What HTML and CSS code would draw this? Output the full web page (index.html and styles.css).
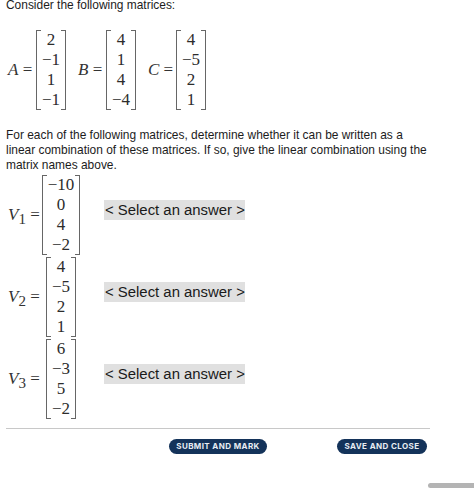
FILE: index.html
```html
<!DOCTYPE html>
<html lang="en">
<head>
<meta charset="utf-8">
<title>Matrices</title>
<link rel="stylesheet" href="styles.css">
</head>
<body>
<main class="page">
  <p class="text">Consider the following matrices:</p>
  <div class="given">
    <div class="eq"><span class="name"><i>A</i> =</span>
      <div class="matrix"><span>2</span><span>−1</span><span>1</span><span>−1</span></div></div>
    <div class="eq"><span class="name"><i>B</i> =</span>
      <div class="matrix"><span>4</span><span>1</span><span>4</span><span>−4</span></div></div>
    <div class="eq"><span class="name"><i>C</i> =</span>
      <div class="matrix"><span>4</span><span>−5</span><span>2</span><span>1</span></div></div>
  </div>
  <p class="text">For each of the following matrices, determine whether it can be written as a linear combination of these matrices. If so, give the linear combination using the matrix names above.</p>
  <div class="questions">
    <div class="question">
      <span class="vname"><i>V</i><sub>1</sub> =</span>
      <div class="slot"><div class="matrix wide"><span>−10</span><span>0</span><span>4</span><span>−2</span></div></div>
      <span class="select">&lt; Select an answer &gt;</span>
    </div>
    <div class="question">
      <span class="vname"><i>V</i><sub>2</sub> =</span>
      <div class="slot"><div class="matrix"><span>4</span><span>−5</span><span>2</span><span>1</span></div></div>
      <span class="select">&lt; Select an answer &gt;</span>
    </div>
    <div class="question">
      <span class="vname"><i>V</i><sub>3</sub> =</span>
      <div class="slot"><div class="matrix"><span>6</span><span>−3</span><span>5</span><span>−2</span></div></div>
      <span class="select">&lt; Select an answer &gt;</span>
    </div>
  </div>
  <hr class="rule">
  <div class="actions">
    <button class="btn submit" type="button">SUBMIT AND MARK</button>
    <button class="btn save" type="button">SAVE AND CLOSE</button>
  </div>
</main>
<div class="thumb"></div>
</body>
</html>
```
FILE: styles.css
```css
html, body {
  margin: 0;
  padding: 0;
  background: #fff;
  overflow: hidden;
  height: 100%;
}
.page {
  width: 424px;
  margin: -2px 0 0 6px;
  color: #1c1c1c;
  font-family: "Liberation Sans", Arial, sans-serif;
}
.text {
  margin: 0;
  font-size: 11.95px;
  line-height: 15px;
}
.given {
  display: flex;
  gap: 12px;
  margin: 17px 0 18px 2px;
}
.eq {
  display: flex;
  align-items: center;
  gap: 1px;
}
.name {
  font-family: "Liberation Serif", serif;
  font-size: 17px;
  color: #333;
  white-space: nowrap;
}
.eq .name { min-width: 27px; }
.matrix {
  position: relative;
  display: flex;
  flex-direction: column;
  width: 30px;
  height: 80px;
  box-sizing: border-box;
  align-items: center;
  font-family: "Liberation Serif", serif;
  font-size: 17px;
  color: #2c2c2c;
}
.matrix.wide { width: 38px; }
.matrix span {
  height: 20px;
  line-height: 20px;
  white-space: nowrap;
}
.matrix::before,
.matrix::after {
  content: "";
  position: absolute;
  top: 0;
  bottom: 0;
  width: 4px;
  border: 1px solid #666;
}
.matrix::before { left: 0; border-right: 0; }
.matrix::after { right: 0; border-left: 0; }
.questions {
  display: flex;
  flex-direction: column;
  gap: 1px;
  margin: 1px 0 0 2px;
}
.question {
  display: flex;
  align-items: center;
  height: 81px;
}
.vname {
  width: 30px;
  font-family: "Liberation Serif", serif;
  font-size: 17px;
  color: #333;
  white-space: nowrap;
}
.vname sub {
  font-size: 15px;
  line-height: 0;
  vertical-align: -4px;
}
.slot {
  width: 46px;
  display: flex;
  justify-content: center;
}
.select {
  margin: 0 0 9px 20px;
  padding: 0 1px;
  width: 141px;
  box-sizing: border-box;
  height: 20px;
  line-height: 20px;
  background: #e0e0e0;
  font-size: 14.9px;
  color: #1a1a1a;
  white-space: nowrap;
}
.rule {
  margin: 9px 0 0;
  border: 0;
  border-top: 1px solid #c8c8c8;
}
.actions {
  display: flex;
  margin-top: 10px;
  padding-left: 163px;
  gap: 70px;
}
.btn {
  height: 15px;
  padding: 0;
  border: 0;
  border-radius: 8px;
  background: #14335a;
  color: #e8edf3;
  font-family: Inter, sans-serif;
  font-size: 8px;
  font-weight: 700;
  letter-spacing: 0.4px;
  line-height: 15px;
  white-space: nowrap;
}
.submit { width: 98px; }
.save { width: 90px; }
.thumb {
  position: absolute;
  left: 428px;
  right: 0;
  top: 483px;
  height: 5px;
  background: #b4b4b4;
  border-radius: 3px 0 0 3px;
}
```
